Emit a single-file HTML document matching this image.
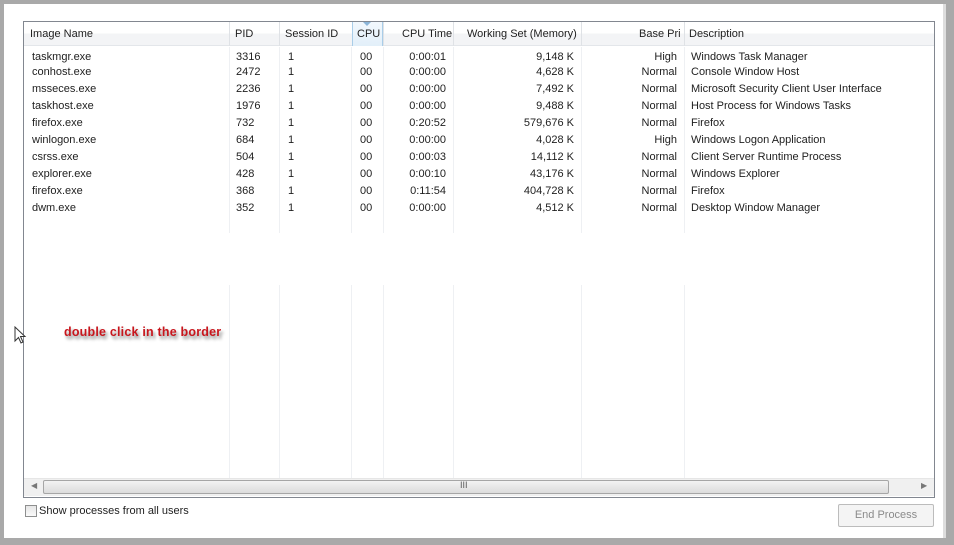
<!DOCTYPE html>
<html><head><style>
*{margin:0;padding:0;box-sizing:border-box}
body{width:954px;height:545px;background:#a9a9a9;position:relative;overflow:hidden;font-family:"Liberation Sans",sans-serif;font-size:11px;color:#1e1e1e}
.win{position:absolute;left:4px;top:4px;width:942px;height:534px;background:#fff;border-right:3px solid #ddd}
.a{position:absolute;white-space:nowrap}
.list{position:absolute;left:23px;top:21px;width:912px;height:477px;border:1px solid #828790;background:#fff}
.hdr{position:absolute;left:0;top:0;width:910px;height:24px;background:linear-gradient(#fff 0,#fff 50%,#f3f4f6 50%,#f3f4f6 100%);border-bottom:1px solid #e3e6ea}
.vl{position:absolute;width:1px;background:#eef0f3}
.hl{position:absolute;top:0;height:24px;width:1px;background:#dfe2e6}
.r{text-align:right}
</style></head><body>
<div class="win"></div>
<div class="list">
 <div class="hdr">
  <div style="position:absolute;left:328px;top:0;width:31px;height:24px;background:linear-gradient(#f2f8fd,#e2eff9);border-left:1px solid #a9cde8;border-right:1px solid #a9cde8"></div>
  <div class="a" style="left:339px;top:0;width:0;height:0;border-left:4px solid transparent;border-right:4px solid transparent;border-top:4px solid #8bb5d8"></div>
 </div>
 <div class="hl" style="left:205px"></div><div class="hl" style="left:255px"></div><div class="hl" style="left:359px"></div><div class="hl" style="left:429px"></div><div class="hl" style="left:557px"></div><div class="hl" style="left:660px"></div>
 <div class="vl" style="left:205px;top:25px;height:186px"></div><div class="vl" style="left:255px;top:25px;height:186px"></div><div class="vl" style="left:327px;top:25px;height:186px"></div><div class="vl" style="left:359px;top:25px;height:186px"></div><div class="vl" style="left:429px;top:25px;height:186px"></div><div class="vl" style="left:557px;top:25px;height:186px"></div><div class="vl" style="left:660px;top:25px;height:186px"></div>
 <div class="vl" style="left:205px;top:263px;height:193px"></div><div class="vl" style="left:255px;top:263px;height:193px"></div><div class="vl" style="left:327px;top:263px;height:193px"></div><div class="vl" style="left:359px;top:263px;height:193px"></div><div class="vl" style="left:429px;top:263px;height:193px"></div><div class="vl" style="left:557px;top:263px;height:193px"></div><div class="vl" style="left:660px;top:263px;height:193px"></div>
 <div class="a" style="left:0;top:456px;width:910px;height:18px;background:#f0f0f0;border-top:1px solid #e6e6e6">
  <div class="a" style="left:19px;top:1px;width:846px;height:14px;background:linear-gradient(#f3f3f3,#dcdcdc);border:1px solid #a6a6a6;border-radius:2px"></div>
  <div class="a" style="left:436px;top:1px;font-size:9px;color:#555">III</div>
  <div class="a" style="left:7px;top:2px;font-size:8px;color:#777">&#9664;</div>
  <div class="a" style="left:897px;top:2px;font-size:8px;color:#777">&#9654;</div>
 </div>
</div>
<div id="t"></div>
<script>
var h=[["Image Name",30,0],["PID",235,0],["Session ID",285,0],["CPU",357,0],["CPU Time",402,0],["Working Set (Memory)",467,0],["Base Pri",639,0],["Description",689,0]];
var s="";h.forEach(function(c){s+='<div class="a" style="left:'+c[1]+'px;top:28px">'+c[0]+'</div>'});
var rows=[["taskmgr.exe","3316","0:00:01","9,148 K","High","Windows Task Manager"],["conhost.exe","2472","0:00:00","4,628 K","Normal","Console Window Host"],["msseces.exe","2236","0:00:00","7,492 K","Normal","Microsoft Security Client User Interface"],["taskhost.exe","1976","0:00:00","9,488 K","Normal","Host Process for Windows Tasks"],["firefox.exe","732","0:20:52","579,676 K","Normal","Firefox"],["winlogon.exe","684","0:00:00","4,028 K","High","Windows Logon Application"],["csrss.exe","504","0:00:03","14,112 K","Normal","Client Server Runtime Process"],["explorer.exe","428","0:00:10","43,176 K","Normal","Windows Explorer"],["firefox.exe","368","0:11:54","404,728 K","Normal","Firefox"],["dwm.exe","352","0:00:00","4,512 K","Normal","Desktop Window Manager"]];
var ys=[51,66,83,100,117,134,151,168,185,202];
rows.forEach(function(r,i){var y=ys[i];
s+='<div class="a" style="left:32px;top:'+y+'px">'+r[0]+'</div>';
s+='<div class="a" style="left:236px;top:'+y+'px">'+r[1]+'</div>';
s+='<div class="a" style="left:288px;top:'+y+'px">1</div>';
s+='<div class="a" style="left:360px;top:'+y+'px">00</div>';
s+='<div class="a r" style="right:508px;top:'+y+'px">'+r[2]+'</div>';
s+='<div class="a r" style="right:380px;top:'+y+'px">'+r[3]+'</div>';
s+='<div class="a r" style="right:277px;top:'+y+'px">'+r[4]+'</div>';
s+='<div class="a" style="left:691px;top:'+y+'px">'+r[5]+'</div>';});
document.getElementById('t').innerHTML=s;
</script>
<div class="a" style="left:64px;top:325px;color:#c8161d;font-weight:bold;font-size:12.5px;letter-spacing:0.2px;text-shadow:2px 3px 3px #888">double click in the border</div>
<svg class="a" style="left:14px;top:326px" width="14" height="20"><path d="M1 1 L1 15 L4.5 11.5 L7 17 L9 16 L6.5 10.5 L11 10.5 Z" fill="#fff" stroke="#333" stroke-width="1"/></svg>
<div class="a" style="left:25px;top:505px;width:12px;height:12px;border:1px solid #8e8f8f;background:linear-gradient(#e6e6e6,#fafafa)"></div>
<div class="a" style="left:39px;top:505px">Show processes from all users</div>
<div class="a" style="left:838px;top:504px;width:96px;height:23px;border:1px solid #bcbcbc;border-radius:2px;background:#f4f4f4;color:#8a8a8a;text-align:center;line-height:21px">End Process</div>
</body></html>
